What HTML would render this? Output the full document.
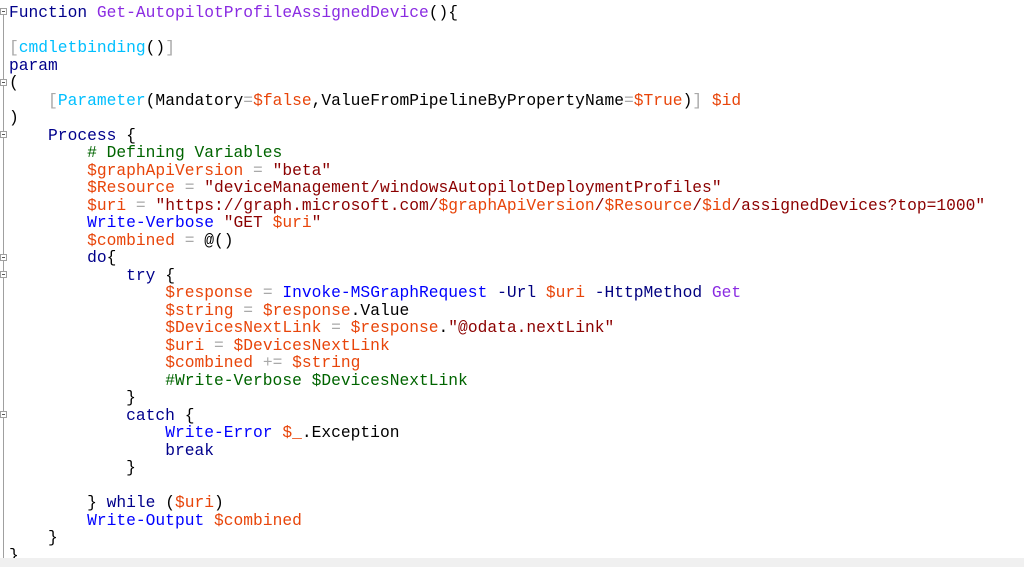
<!DOCTYPE html>
<html><head><meta charset="utf-8"><style>
html,body{margin:0;padding:0;background:#fff;width:1024px;height:567px;overflow:hidden;position:relative}
pre{position:absolute;left:9px;top:4px;margin:0;font-family:"Liberation Mono",monospace;font-size:16.27px;line-height:17.5px;color:#000;white-space:pre}
.k{color:#00008B}.f{color:#8A2BE2}.c{color:#0000FF}.v{color:#E8450A}.s{color:#8B0000}.m{color:#006400}.o{color:#A9A9A9}.a{color:#00BFFF}.p{color:#000080}
.g{position:absolute;left:3px;width:1px;background:#a0a0a0}
.b{position:absolute;left:0;width:7px;height:7px;border:1px solid #a0a0a0;box-sizing:border-box;background:#fff}
.b::after{content:"";position:absolute;left:1px;top:2px;width:3px;height:1px;background:#555}
.bar{position:absolute;left:0;top:558px;width:1024px;height:9px;background:#f0f0f0}
</style></head><body>
<div class="g" style="top:13px;height:545px"></div>
<div class="b" style="top:8px"></div>
<div class="b" style="top:79px"></div>
<div class="b" style="top:131px"></div>
<div class="b" style="top:254px"></div>
<div class="b" style="top:271px"></div>
<div class="b" style="top:411px"></div>
<pre><span class="k">Function</span> <span class="f">Get-AutopilotProfileAssignedDevice</span>(){

<span class="o">[</span><span class="a">cmdletbinding</span>()<span class="o">]</span>
<span class="k">param</span>
(
    <span class="o">[</span><span class="a">Parameter</span>(Mandatory<span class="o">=</span><span class="v">$false</span>,ValueFromPipelineByPropertyName<span class="o">=</span><span class="v">$True</span>)<span class="o">]</span> <span class="v">$id</span>
)
    <span class="k">Process</span> {
        <span class="m"># Defining Variables</span>
        <span class="v">$graphApiVersion</span> <span class="o">=</span> <span class="s">"beta"</span>
        <span class="v">$Resource</span> <span class="o">=</span> <span class="s">"deviceManagement/windowsAutopilotDeploymentProfiles"</span>
        <span class="v">$uri</span> <span class="o">=</span> <span class="s">"https://graph.microsoft.com/</span><span class="v">$graphApiVersion</span><span class="s">/</span><span class="v">$Resource</span><span class="s">/</span><span class="v">$id</span><span class="s">/assignedDevices?top=1000"</span>
        <span class="c">Write-Verbose</span> <span class="s">"GET </span><span class="v">$uri</span><span class="s">"</span>
        <span class="v">$combined</span> <span class="o">=</span> @()
        <span class="k">do</span>{
            <span class="k">try</span> {
                <span class="v">$response</span> <span class="o">=</span> <span class="c">Invoke-MSGraphRequest</span> <span class="p">-Url</span> <span class="v">$uri</span> <span class="p">-HttpMethod</span> <span class="f">Get</span>
                <span class="v">$string</span> <span class="o">=</span> <span class="v">$response</span>.Value
                <span class="v">$DevicesNextLink</span> <span class="o">=</span> <span class="v">$response</span>.<span class="s">"@odata.nextLink"</span>
                <span class="v">$uri</span> <span class="o">=</span> <span class="v">$DevicesNextLink</span>
                <span class="v">$combined</span> <span class="o">+=</span> <span class="v">$string</span>
                <span class="m">#Write-Verbose $DevicesNextLink</span>
            }
            <span class="k">catch</span> {
                <span class="c">Write-Error</span> <span class="v">$_</span>.Exception
                <span class="k">break</span>
            }

        } <span class="k">while</span> (<span class="v">$uri</span>)
        <span class="c">Write-Output</span> <span class="v">$combined</span>
    }
}</pre>
<div class="bar"></div>
</body></html>
